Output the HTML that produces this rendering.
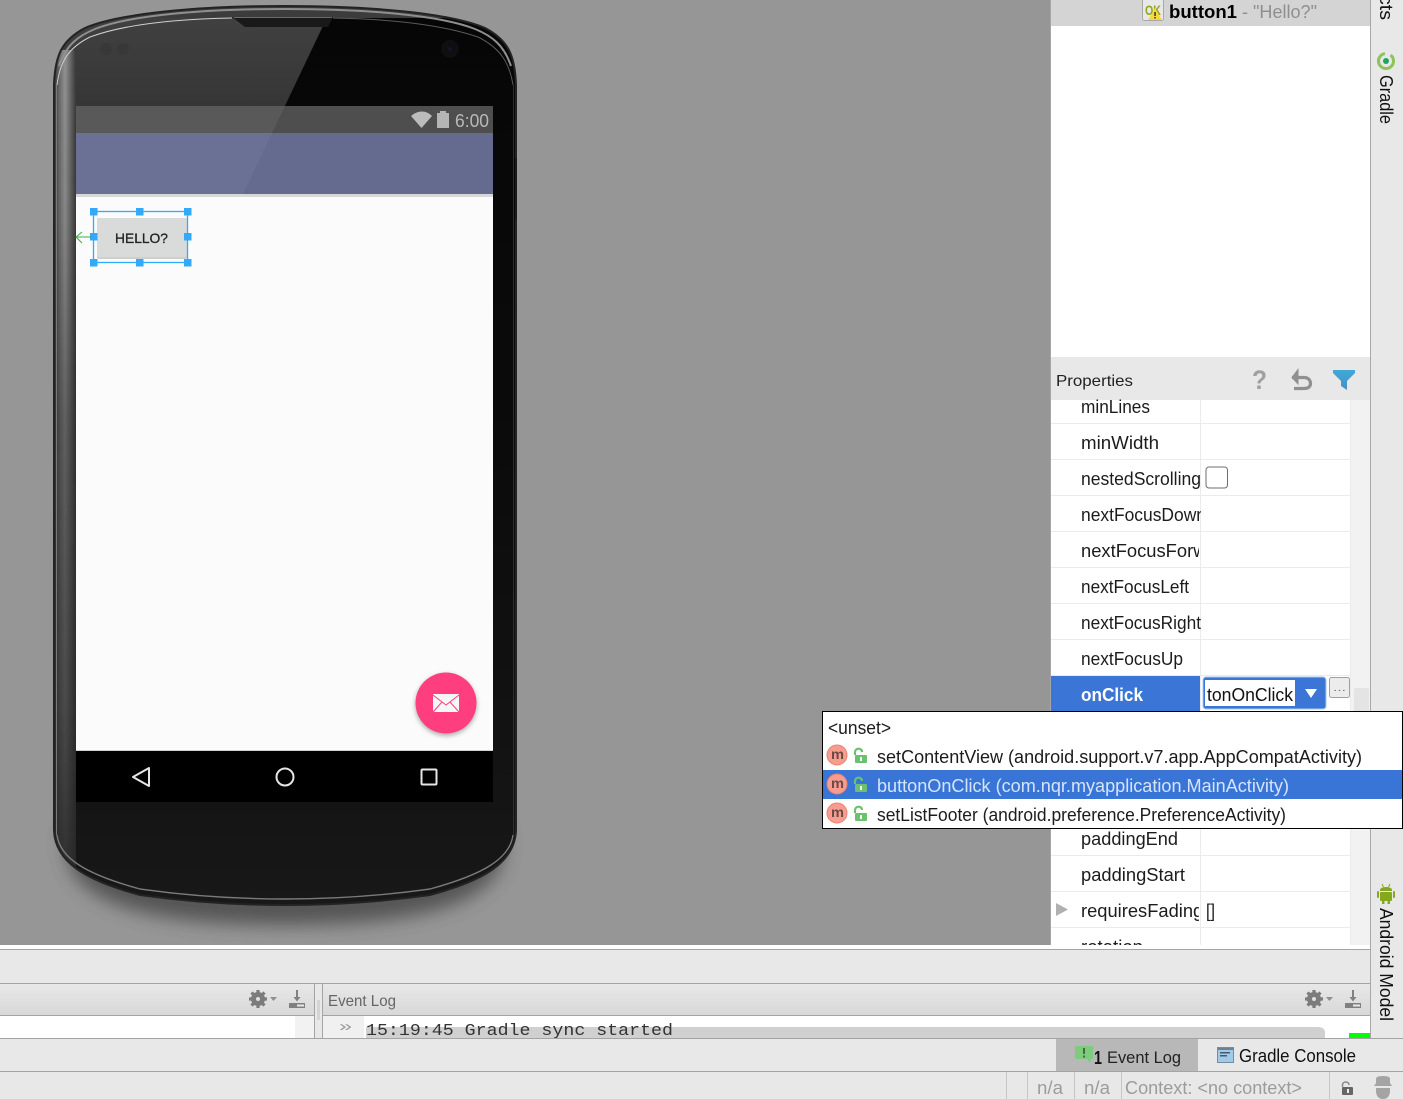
<!DOCTYPE html>
<html><head><meta charset="utf-8"><style>
html,body{margin:0;padding:0;width:1403px;height:1099px;overflow:hidden;background:#969696}
svg{display:block}
text{font-family:"Liberation Sans",sans-serif;font-size:18px;fill:#1c1c1c;white-space:pre}
</style></head><body>
<svg width="1403" height="1099" viewBox="0 0 1403 1099" xmlns="http://www.w3.org/2000/svg">
<defs>
<linearGradient id="side" x1="0" x2="1" y1="0" y2="0"><stop offset="0" stop-color="#333"/><stop offset=".25" stop-color="#6c6c6c"/><stop offset=".5" stop-color="#929292"/><stop offset=".75" stop-color="#666"/><stop offset="1" stop-color="#383838"/></linearGradient>
<linearGradient id="sideFade" gradientUnits="userSpaceOnUse" x1="0" x2="0" y1="60" y2="860"><stop offset="0" stop-color="#fff"/><stop offset=".2" stop-color="#fff" stop-opacity=".9"/><stop offset=".45" stop-color="#fff" stop-opacity=".55"/><stop offset=".8" stop-color="#fff" stop-opacity=".35"/><stop offset="1" stop-color="#fff" stop-opacity=".12"/></linearGradient>
<mask id="fadeM" maskUnits="userSpaceOnUse" x="50" y="50" width="30" height="820"><rect x="50" y="50" width="30" height="820" fill="url(#sideFade)"/></mask>
<linearGradient id="glare" gradientUnits="userSpaceOnUse" x1="0" x2="0" y1="20" y2="194"><stop offset="0" stop-color="#404040"/><stop offset="1" stop-color="#2c2c2c"/></linearGradient>
<linearGradient id="bodyG" gradientUnits="userSpaceOnUse" x1="0" x2="0" y1="5" y2="905"><stop offset="0" stop-color="#060606"/><stop offset=".5" stop-color="#0b0b0b"/><stop offset=".88" stop-color="#141414"/><stop offset="1" stop-color="#181818"/></linearGradient>
<linearGradient id="hdr" x1="0" x2="0" y1="0" y2="1"><stop offset="0" stop-color="#e8e8e8"/><stop offset="1" stop-color="#d8d8d8"/></linearGradient>
<linearGradient id="filt" x1="0" x2="0" y1="0" y2="1"><stop offset="0" stop-color="#3fa9d8"/><stop offset="1" stop-color="#4a8fc0"/></linearGradient>
<filter id="blur" x="-20%" y="-20%" width="140%" height="140%"><feGaussianBlur stdDeviation="9"/></filter>
<filter id="fabS" x="-30%" y="-30%" width="160%" height="160%"><feGaussianBlur stdDeviation="2"/></filter>
<clipPath id="c1"><rect x="1051" y="400" width="150" height="546"/></clipPath>
<clipPath id="c2"><rect x="1051" y="400" width="148" height="545"/></clipPath>
<clipPath id="body"><path d="M54 85C55 55 62 40 85 28C120 13 200 6 285 6C370 6 450 13 485 28C508 40 515 55 516 85V830C515 862 485 880 430 895C380 902 330 905 285 905C240 905 190 902 140 895C85 880 55 862 54 830Z"/></clipPath>
</defs>
<rect width="1403" height="1099" fill="#969696"/>

<!-- phone -->
<path d="M70 820H500C520 885 470 925 285 925C100 925 50 885 70 820Z" fill="#444" filter="url(#blur)" opacity=".8"/>
<path d="M54 85C55 55 62 40 85 28C120 13 200 6 285 6C370 6 450 13 485 28C508 40 515 55 516 85V830C515 862 485 880 430 895C380 902 330 905 285 905C240 905 190 902 140 895C85 880 55 862 54 830Z" fill="url(#bodyG)"/>
<g clip-path="url(#body)">
<path d="M50 5H333L322 28L243 194H50Z" fill="url(#glare)"/>
<rect x="54" y="60" width="22" height="810" fill="#262626"/>
<rect x="54" y="50" width="22" height="820" fill="url(#side)" mask="url(#fadeM)"/>
<rect x="54" y="5" width="462" height="13" fill="#3c3c3c"/>
<path d="M54 860C70 885 110 892 140 897C190 902 240 905 285 905C330 905 380 902 430 897C460 892 500 885 516 860V905H54Z" fill="#333"/>
</g>
<path d="M54 85C55 55 62 40 85 28C120 13 200 6 285 6C370 6 450 13 485 28C508 40 515 55 516 85V830C515 862 485 880 430 895C380 902 330 905 285 905C240 905 190 902 140 895C85 880 55 862 54 830Z" fill="none" stroke="#232323" stroke-width="2"/>
<path d="M59 66C66 45 78 36 95 29C130 15 205 9 285 9C365 9 440 15 475 29C492 36 504 45 511 66" fill="none" stroke="#8f8f8f" stroke-width="2"/>
<path d="M57 85C60 60 70 47 90 37C125 24 180 19 232 18" fill="none" stroke="#d0d0d0" stroke-width="1"/>
<path d="M333 18C385 19 440 24 478 37C498 47 509 60 513 85" fill="none" stroke="#5a5a5a" stroke-width="1"/>
<rect x="56" y="85" width="1" height="750" fill="#7a7a7a"/>
<rect x="513" y="85" width="1" height="750" fill="#2e2e2e"/>
<path d="M57 835C60 858 85 874 140 889C190 896 240 899 285 899C330 899 380 896 430 889C485 874 510 858 513 835" fill="none" stroke="#7a7a7a" stroke-width="1.400"/>
<path d="M232 17H333L328 27H245Z" fill="#191919"/>
<rect x="234" y="17" width="98" height="1" fill="#6a6a6a"/>
<circle cx="450" cy="49" r="9" fill="#0f0f12"/><circle cx="450" cy="49" r="2" fill="#14142a"/>
<circle cx="106" cy="49" r="6" fill="#383838"/><circle cx="123" cy="49" r="6" fill="#383838"/>
<rect x="515" y="158" width="2" height="62" fill="#1a1a1a"/>

<!-- screen -->
<rect x="76" y="106" width="417" height="27" fill="#4e4e4e"/>
<path d="M76 106H285L272 133H76Z" fill="#595959"/>
<rect x="76" y="133" width="417" height="61" fill="#646b8f"/>
<path d="M76 133H272L243 194H76Z" fill="#6b7095"/>
<rect x="76" y="194" width="417" height="557" fill="#fbfbfb"/>
<rect x="76" y="194" width="417" height="3" fill="#d8d8d8"/>
<path d="M411 116C418 110 426 110 432 116L421.500 128Z" fill="#bcbcbc"/>
<path d="M440 113V111H446V113H449V128H437V113Z" fill="#b5b5b5"/>
<text x="455" y="127" textLength="34" lengthAdjust="spacingAndGlyphs" style="font-size:18px;fill:#b8b8b8">6:00</text>

<!-- selected button -->
<rect x="97" y="218" width="90" height="41" rx="2" fill="#cfcfcf"/>
<rect x="97" y="218" width="90" height="39" rx="2" fill="#d9dbda"/>
<text x="115" y="243" textLength="53" lengthAdjust="spacingAndGlyphs" style="font-size:14px;fill:#222;stroke:#222;stroke-width:.3">HELLO?</text>
<rect x="93.500" y="211.500" width="94" height="51" fill="none" stroke="#33a9fc" stroke-width="1.300"/>
<g fill="#33a9fc"><rect x="90" y="208" width="7.500" height="7.500"/><rect x="136" y="208" width="7.500" height="7.500"/><rect x="184" y="208" width="7.500" height="7.500"/><rect x="90" y="233" width="7.500" height="7.500"/><rect x="184" y="233" width="7.500" height="7.500"/><rect x="90" y="259" width="7.500" height="7.500"/><rect x="136" y="259" width="7.500" height="7.500"/><rect x="184" y="259" width="7.500" height="7.500"/></g>
<path d="M76 237H92M82 232L76 237L82 243" fill="none" stroke="#3cb043" stroke-width="1"/>

<!-- fab -->
<circle cx="446" cy="705" r="31" fill="#9a9a9a" opacity=".75" filter="url(#fabS)"/>
<circle cx="446" cy="703" r="30.500" fill="#fe3e7f"/>
<path d="M433 694H459V712H433Z" fill="#f6f6f6"/>
<path d="M433 695L446 705L459 695M433 712L442 702M459 712L450 702" fill="none" stroke="#fe3e7f" stroke-width="1"/>

<!-- nav -->
<rect x="76" y="751" width="417" height="51" fill="#000"/>
<rect x="76" y="750" width="417" height="1" fill="#d0d0d0"/>
<path d="M149 768V786L133 777Z" fill="none" stroke="#e6e6e6" stroke-width="2" stroke-linejoin="round"/>
<circle cx="285" cy="777" r="8.500" fill="none" stroke="#e6e6e6" stroke-width="2"/>
<rect x="421.500" y="769.500" width="15" height="15" rx="1" fill="none" stroke="#e6e6e6" stroke-width="2"/>

<!-- right panel -->
<rect x="1050" y="0" width="1" height="945" fill="#a6a6a6"/>
<rect x="1051" y="0" width="319" height="945" fill="#fff"/>
<rect x="1051" y="0" width="319" height="26" fill="#d4d4d4"/>
<rect x="1142.500" y="-3.500" width="21" height="24" rx="2" fill="#e8e8e8" stroke="#a8a8a8"/>
<text x="1145" y="15" textLength="16" lengthAdjust="spacingAndGlyphs" style="font-size:14px;font-weight:bold;fill:#8fa61c">OK</text>
<path d="M1155 8L1162 20H1148Z" fill="#f6d838"/><rect x="1154.300" y="12" width="1.500" height="4" fill="#333"/><rect x="1154.300" y="17" width="1.500" height="1.500" fill="#333"/>
<text x="1169" y="18" textLength="68" lengthAdjust="spacingAndGlyphs" style="font-weight:bold;fill:#000">button1</text>
<text x="1242" y="18" textLength="75" lengthAdjust="spacingAndGlyphs" style="fill:#8f8f8f">- "Hello?"</text>

<rect x="1051" y="357" width="319" height="43" fill="#e8e8e8"/>
<text x="1056" y="386" textLength="77" lengthAdjust="spacingAndGlyphs" style="font-size:16px;fill:#222">Properties</text>
<text x="1252" y="389" textLength="15" lengthAdjust="spacingAndGlyphs" style="font-size:27px;font-weight:bold;fill:#a0a0a0">?</text>
<path d="M1292 377.500H1304C1309 377.500 1310.500 381 1310.500 383.500C1310.500 386 1309 388.500 1304 388.500H1294" fill="none" stroke="#909090" stroke-width="3.200"/>
<path d="M1298 369.500V384L1292 377.500Z" fill="#909090" stroke="#909090" stroke-width="1"/>
<path d="M1333 370H1355V373L1347 381V390L1341 386V381L1333 373Z" fill="url(#filt)"/>

<!-- property table -->
<rect x="1351" y="400" width="19" height="545" fill="#f2f2f2"/>
<rect x="1354" y="688" width="15" height="40" rx="2" fill="#e4e4e4"/>
<g fill="#ebebeb">
<rect x="1051" y="423" width="300" height="1"/><rect x="1051" y="459" width="300" height="1"/><rect x="1051" y="495" width="300" height="1"/><rect x="1051" y="531" width="300" height="1"/><rect x="1051" y="567" width="300" height="1"/><rect x="1051" y="603" width="300" height="1"/><rect x="1051" y="639" width="300" height="1"/><rect x="1051" y="675" width="300" height="1"/><rect x="1051" y="855" width="300" height="1"/><rect x="1051" y="891" width="300" height="1"/><rect x="1051" y="927" width="300" height="1"/>
<rect x="1200" y="400" width="1" height="545"/><rect x="1350" y="400" width="1" height="545"/>
</g>
<text x="1081" y="413" textLength="69" lengthAdjust="spacingAndGlyphs">minLines</text>
<text x="1081" y="449" textLength="78" lengthAdjust="spacingAndGlyphs">minWidth</text>
<g clip-path="url(#c1)">
<text x="1081" y="485" textLength="120" lengthAdjust="spacingAndGlyphs">nestedScrolling</text>
<text x="1081" y="521" textLength="125" lengthAdjust="spacingAndGlyphs">nextFocusDown</text>
</g>
<g clip-path="url(#c2)">
<text x="1081" y="557" textLength="152" lengthAdjust="spacingAndGlyphs">nextFocusForward</text>
<text x="1081" y="917" textLength="165" lengthAdjust="spacingAndGlyphs">requiresFadingEdge</text>
<text x="1081" y="953" textLength="62" lengthAdjust="spacingAndGlyphs">rotation</text>
</g>
<text x="1081" y="593" textLength="108" lengthAdjust="spacingAndGlyphs">nextFocusLeft</text>
<text x="1081" y="629" textLength="120" lengthAdjust="spacingAndGlyphs">nextFocusRight</text>
<text x="1081" y="665" textLength="102" lengthAdjust="spacingAndGlyphs">nextFocusUp</text>
<text x="1081" y="845" textLength="97" lengthAdjust="spacingAndGlyphs">paddingEnd</text>
<text x="1081" y="881" textLength="104" lengthAdjust="spacingAndGlyphs">paddingStart</text>
<text x="1206" y="917" textLength="9" lengthAdjust="spacingAndGlyphs">[]</text>
<rect x="1206" y="467" width="21.500" height="21" rx="3" fill="#fff" stroke="#6e6e6e" stroke-width="1"/>
<path d="M1056 903L1068 909.500L1056 916Z" fill="#b0b0b0"/>

<!-- onClick row -->
<rect x="1051" y="676" width="149" height="36" fill="#3b75d6"/>
<text x="1081" y="701" textLength="62" lengthAdjust="spacingAndGlyphs" style="font-weight:bold;fill:#fff">onClick</text>
<rect x="1203" y="677" width="123" height="32" rx="3" fill="#3b75d6" stroke="#a9c6ee" stroke-width="1"/>
<rect x="1205" y="680" width="90" height="26" fill="#fff"/>
<text x="1207" y="701" textLength="86" lengthAdjust="spacingAndGlyphs" style="fill:#111">tonOnClick</text>
<path d="M1305 689H1317L1311 698Z" fill="#fff"/>
<rect x="1329.500" y="677.500" width="20" height="20" rx="2" fill="#ececec" stroke="#a0a0a0"/>
<text x="1333" y="691" textLength="13" lengthAdjust="spacingAndGlyphs" style="font-size:10px;fill:#777">...</text>

<!-- right strip -->
<rect x="1370" y="0" width="1" height="1038" fill="#a8a8a8"/>
<rect x="1371" y="0" width="32" height="1038" fill="#e8e8e8"/>
<text transform="translate(1380,-5) rotate(90)" x="0" y="0" textLength="25" lengthAdjust="spacingAndGlyphs" style="fill:#111">cts</text>
<circle cx="1386" cy="61" r="7.500" fill="none" stroke="#8cc45a" stroke-width="3" stroke-dasharray="34 6"/>
<circle cx="1386" cy="61" r="3" fill="#1fa463"/>
<text transform="translate(1380,75) rotate(90)" x="0" y="0" textLength="49" lengthAdjust="spacingAndGlyphs" style="fill:#111">Gradle</text>
<path d="M1380 890C1380 886 1392 886 1392 890V891H1380Z" fill="#86a81f"/><rect x="1380" y="892" width="12" height="9" rx="1" fill="#86a81f"/><rect x="1377" y="891" width="2" height="7" rx="1" fill="#86a81f"/><rect x="1393" y="891" width="2" height="7" rx="1" fill="#86a81f"/><rect x="1382" y="900" width="2.500" height="4" fill="#86a81f"/><rect x="1387.500" y="900" width="2.500" height="4" fill="#86a81f"/><path d="M1382 884L1383.500 887M1390 884L1388.500 887" stroke="#86a81f"/>
<text transform="translate(1380,908) rotate(90)" x="0" y="0" textLength="113" lengthAdjust="spacingAndGlyphs" style="fill:#111">Android Model</text>

<!-- popup -->
<rect x="822.500" y="711.500" width="580" height="117" fill="#fff" stroke="#000" stroke-width="1"/>
<rect x="823" y="770" width="579" height="29" fill="#3875d7"/>
<text x="828" y="734" textLength="63" lengthAdjust="spacingAndGlyphs">&lt;unset&gt;</text>
<g>
<circle cx="837" cy="755" r="10" fill="#f79d90" stroke="#e9806f"/>
<text x="831" y="759" textLength="13" lengthAdjust="spacingAndGlyphs" style="font-size:14px;font-weight:bold;fill:#6b4a44">m</text>
<rect x="855" y="755" width="12" height="8" rx="1" fill="#6cc16f"/><path d="M855 755V752.500C855 747.500 862 747.500 862 752" fill="none" stroke="#6cc16f" stroke-width="2.200"/><rect x="860" y="757" width="2" height="4" fill="#fff"/>
<circle cx="837" cy="784" r="10" fill="#f79d90" stroke="#e9806f"/>
<text x="831" y="788" textLength="13" lengthAdjust="spacingAndGlyphs" style="font-size:14px;font-weight:bold;fill:#6b4a44">m</text>
<rect x="855" y="784" width="12" height="8" rx="1" fill="#6cc16f"/><path d="M855 784V781.500C855 776.500 862 776.500 862 781" fill="none" stroke="#6cc16f" stroke-width="2.200"/><rect x="860" y="786" width="2" height="4" fill="#fff"/>
<circle cx="837" cy="813" r="10" fill="#f79d90" stroke="#e9806f"/>
<text x="831" y="817" textLength="13" lengthAdjust="spacingAndGlyphs" style="font-size:14px;font-weight:bold;fill:#6b4a44">m</text>
<rect x="855" y="813" width="12" height="8" rx="1" fill="#6cc16f"/><path d="M855 813V810.500C855 805.500 862 805.500 862 810" fill="none" stroke="#6cc16f" stroke-width="2.200"/><rect x="860" y="815" width="2" height="4" fill="#fff"/>
</g>
<text x="877" y="763" textLength="485" lengthAdjust="spacingAndGlyphs">setContentView (android.support.v7.app.AppCompatActivity)</text>
<text x="877" y="792" textLength="412" lengthAdjust="spacingAndGlyphs" style="fill:#d6e4fa">buttonOnClick (com.nqr.myapplication.MainActivity)</text>
<text x="877" y="821" textLength="409" lengthAdjust="spacingAndGlyphs">setListFooter (android.preference.PreferenceActivity)</text>

<!-- bottom area -->
<rect x="0" y="945" width="1370" height="4" fill="#fff"/>
<rect x="0" y="949" width="1370" height="1" fill="#a4a4a4"/>
<rect x="0" y="950" width="1370" height="33" fill="#e8e8e8"/>
<rect x="0" y="983" width="1370" height="1" fill="#a4a4a4"/>
<rect x="0" y="984" width="1370" height="31" fill="url(#hdr)"/>
<rect x="0" y="1015" width="1370" height="1" fill="#a4a4a4"/>
<rect x="0" y="1016" width="1370" height="22" fill="#fff"/>
<rect x="295" y="1016" width="19" height="22" fill="#f2f2f2"/>
<rect x="314" y="984" width="1" height="54" fill="#a4a4a4"/>
<rect x="315" y="984" width="7" height="54" fill="#e8e8e8"/>
<rect x="322" y="984" width="1" height="54" fill="#a4a4a4"/>
<rect x="317" y="1000" width="3" height="20" fill="#d4d4d4"/>
<rect x="323" y="1016" width="41" height="22" fill="#f0f0f0"/>
<text x="328" y="1006" textLength="68" lengthAdjust="spacingAndGlyphs" style="font-size:16px;fill:#666">Event Log</text>
<text x="339" y="1031" textLength="13" lengthAdjust="spacingAndGlyphs" style="font-size:15px;fill:#999">»</text>
<path d="M366 1027H1318Q1325 1027 1325 1033V1038H366Z" fill="#d0d0d0"/>
<text x="366" y="1035" textLength="307" lengthAdjust="spacingAndGlyphs" style="font-family:'Liberation Mono',monospace;font-size:17px;fill:#333">15:19:45 Gradle sync started</text>
<rect x="1349" y="1033" width="21" height="5" fill="#00ff00"/>

<!-- toolbar icons -->
<g id="gear1">
<circle cx="258" cy="999" r="4.500" fill="none" stroke="#7c7c7c" stroke-width="5"/>
<path d="M258 990V993M258 1005V1008M249 999H252M264 999H267M251.500 992.500L253.800 994.800M262.200 1003.200L264.500 1005.500M264.500 992.500L262.200 994.800M253.800 1003.200L251.500 1005.500" stroke="#7c7c7c" stroke-width="3.200"/>
<path d="M270 997H277L273.500 1001Z" fill="#909090"/>
<path d="M297 990V1000" stroke="#808080" stroke-width="2"/>
<path d="M293.500 997H300.500L297 1001.500Z" fill="#808080"/>
<rect x="289" y="1003" width="16" height="5" fill="#808080"/><rect x="297" y="1004.500" width="7" height="2" fill="#e8e8e8"/>
</g>
<use href="#gear1" transform="translate(1056,0)"/>

<!-- tool window bar -->
<rect x="0" y="1038" width="1403" height="1" fill="#a4a4a4"/>
<rect x="0" y="1039" width="1403" height="32" fill="#e8e8e8"/>
<rect x="1056" y="1039" width="142" height="32" fill="#b8b8b8"/>
<path d="M1077 1046H1092Q1093 1046 1093 1047V1058Q1093 1059 1092 1059H1091L1090 1063L1087 1059H1077Q1075 1059 1075 1057V1048Q1075 1046 1077 1046Z" fill="#7ecb7e"/>
<rect x="1083" y="1048" width="2" height="6" fill="#3f6f3f"/><rect x="1083" y="1055.500" width="2" height="2" fill="#3f6f3f"/>
<text x="1094" y="1064" textLength="8" lengthAdjust="spacingAndGlyphs" style="font-weight:bold;fill:#111">1</text>
<text x="1107" y="1063" textLength="74" lengthAdjust="spacingAndGlyphs" style="font-size:17px;fill:#222">Event Log</text>
<rect x="1217.500" y="1047.500" width="16" height="15" fill="#9fcbe8" stroke="#7b8b99"/>
<rect x="1218" y="1048" width="15" height="2" fill="#6f8090"/>
<rect x="1220" y="1052" width="10" height="1.500" fill="#4c5a66"/><rect x="1220" y="1055" width="7" height="1.500" fill="#4c5a66"/>
<text x="1239" y="1062" textLength="117" lengthAdjust="spacingAndGlyphs" style="fill:#111">Gradle Console</text>

<!-- status bar -->
<rect x="0" y="1071" width="1403" height="1" fill="#a4a4a4"/>
<rect x="0" y="1072" width="1403" height="27" fill="#e8e8e8"/>
<g fill="#c6c6c6"><rect x="1006" y="1072" width="1" height="27"/><rect x="1027" y="1072" width="1" height="27"/><rect x="1074" y="1072" width="1" height="27"/><rect x="1121" y="1072" width="1" height="27"/><rect x="1329" y="1072" width="1" height="27"/></g>
<text x="1037" y="1094" textLength="26" lengthAdjust="spacingAndGlyphs" style="fill:#9c9c9c">n/a</text>
<text x="1084" y="1094" textLength="26" lengthAdjust="spacingAndGlyphs" style="fill:#9c9c9c">n/a</text>
<text x="1125" y="1094" textLength="177" lengthAdjust="spacingAndGlyphs" style="fill:#9c9c9c">Context: &lt;no context&gt;</text>
<rect x="1342" y="1087" width="11" height="8" rx="1" fill="#666"/><rect x="1347" y="1089" width="2" height="4" fill="#eee"/>
<path d="M1342.500 1087V1085C1342.500 1081 1349 1081 1349 1085" fill="none" stroke="#888" stroke-width="1.500"/>
<path d="M1374 1086H1392L1390 1083V1079Q1390 1076 1383 1076Q1376 1076 1376 1079V1083Z" fill="#a4a4a4"/>
<path d="M1376 1088H1390V1092Q1389 1099 1383 1099Q1377 1099 1376 1092Z" fill="#a4a4a4"/>
</svg>
</body></html>
